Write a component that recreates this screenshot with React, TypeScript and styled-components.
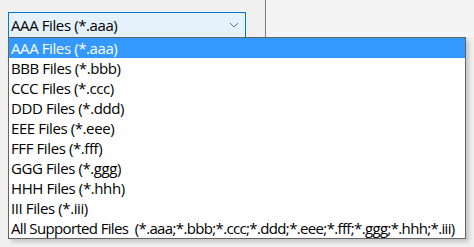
import React from 'react';
import styled, { createGlobalStyle } from 'styled-components';

const GlobalStyle = createGlobalStyle`
	html, body {
		margin: 0;
		padding: 0;
		background: #f0f0f0;
		font-family: 'Open Sans', 'Noto Sans', sans-serif;
	}
`;

const Page = styled.div`
	width: 474px;
	height: 247px;
	overflow: hidden;
	display: flex;
	flex-direction: column;
`;

const TopBar = styled.div`
	display: flex;
	height: 37px;
`;

const LeftPanel = styled.div`
	width: 266px;
	border-right: 1px solid #7f7a8c;
	padding: 12px 0 0 8px;
	box-sizing: border-box;
	background: #f0f0f0;
`;

const RightPanel = styled.div`
	flex: 1;
	background: #f4f4f4;
`;

const Combo = styled.div`
	width: 238px;
	height: 25px;
	box-sizing: border-box;
	border: 1px solid #0078d7;
	border-bottom: none;
	background: #e5f1fb;
	display: flex;
	align-items: center;
	justify-content: space-between;
	padding: 0 6px 0 2px;
	font-size: 15px;
	letter-spacing: -0.4px;
	color: #000;
`;

const Chevron = () => (
	<svg width="10" height="6" viewBox="0 0 10 6">
		<path d="M1 1l4 4 4-4" fill="none" stroke="#5d6b7a" strokeWidth="1" />
	</svg>
);

const ListBox = styled.ul`
	list-style: none;
	margin: 0 0 0 8px;
	padding: 0;
	width: 458px;
	box-sizing: border-box;
	border: 1px solid #646464;
	background: #fff;
	box-shadow: 3px 3px 4px rgba(0, 0, 0, 0.18);
`;

const Item = styled.li<{ $selected?: boolean; $tight?: boolean }>`
	height: 20px;
	line-height: 20px;
	padding-left: 2px;
	font-size: 15px;
	letter-spacing: ${(p) => (p.$tight ? '-0.65px' : '-0.4px')};
	white-space: pre;
	color: ${(p) => (p.$selected ? '#fff' : '#000')};
	background: ${(p) => (p.$selected ? '#3399ff' : 'transparent')};
`;

const items = [
	'AAA Files (*.aaa)',
	'BBB Files (*.bbb)',
	'CCC Files (*.ccc)',
	'DDD Files (*.ddd)',
	'EEE Files (*.eee)',
	'FFF Files (*.fff)',
	'GGG Files (*.ggg)',
	'HHH Files (*.hhh)',
	'III Files (*.iii)',
	'All Supported Files  (*.aaa;*.bbb;*.ccc;*.ddd;*.eee;*.fff;*.ggg;*.hhh;*.iii)',
];

const App = () => (
	<Page>
		<GlobalStyle />
		<TopBar>
			<LeftPanel>
				<Combo>
					<span>AAA Files (*.aaa)</span>
					<Chevron />
				</Combo>
			</LeftPanel>
			<RightPanel />
		</TopBar>
		<ListBox>
			{items.map((text, i) => (
				<Item key={text} $selected={i === 0} $tight={i === items.length - 1}>
					{text}
				</Item>
			))}
		</ListBox>
	</Page>
);

export default App;
